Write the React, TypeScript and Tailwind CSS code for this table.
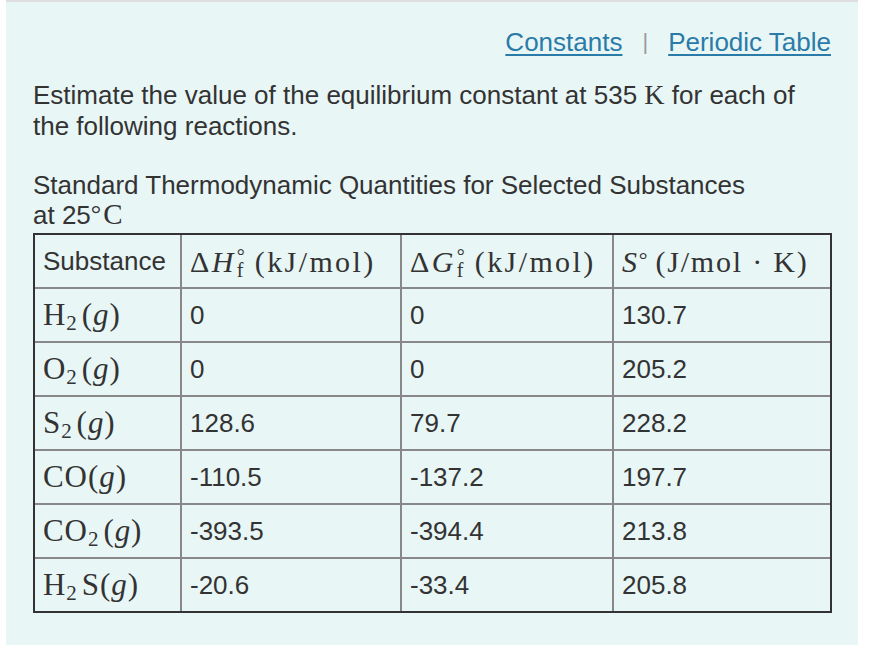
const serif = "font-['Liberation_Serif',serif]";

function SupSub({ sup, sub }: { sup: string; sub: string }) {
  return (
    <span className="inline-flex flex-col align-middle text-[20px] leading-[15px] mx-[1px] tracking-normal">
      <span className="relative top-[3px]">{sup}</span>
      <span className="relative top-[2px]">{sub}</span>
    </span>
  );
}

function Formula({ parts }: { parts: (string | [string])[] }) {
  // string = upright text, [string] = subscript
  return (
    <span className={`${serif} text-[31px] tracking-[0.03em] text-[#333]`}>
      {parts.map((p, i) =>
        typeof p === 'string' ? (
          <span key={i}>{p}</span>
        ) : (
          <sub key={i} className="text-[21px] relative top-[5px] mr-[4px]">
            {p[0]}
          </sub>
        ),
      )}
      (<i>g</i>)
    </span>
  );
}

const rows: { name: (string | [string])[]; h: string; g: string; s: string }[] = [
  { name: ['H', ['2']], h: '0', g: '0', s: '130.7' },
  { name: ['O', ['2']], h: '0', g: '0', s: '205.2' },
  { name: ['S', ['2']], h: '128.6', g: '79.7', s: '228.2' },
  { name: ['CO'], h: '-110.5', g: '-137.2', s: '197.7' },
  { name: ['CO', ['2']], h: '-393.5', g: '-394.4', s: '213.8' },
  { name: ['H', ['2'], 'S'], h: '-20.6', g: '-33.4', s: '205.8' },
];

export default function App() {
  const cell = 'h-[54px] flex items-center px-[8px] border-[#888] border-b-2';
  return (
    <div className="min-h-[652px] bg-white pl-[6px] pr-[24px] font-['Liberation_Sans',Arial,sans-serif] text-[#333]">
      <div className="bg-[#e8f6f6] border-t-2 border-[#dedede] pt-[25px] pb-[32px] pl-[27px] pr-[27px]">
        {/* links */}
        <div className="flex justify-end items-center gap-[20px] text-[26px] leading-[30px]">
          <a href="#" className="text-[#2a7ba8] underline underline-offset-[3px]">
            Constants
          </a>
          <span className="text-[#999] text-[22px]">|</span>
          <a href="#" className="text-[#2a7ba8] underline underline-offset-[3px]">
            Periodic Table
          </a>
        </div>

        <p className="mt-[22px] text-[26px] leading-[31px]">
          Estimate the value of the equilibrium constant at 535 <span className={`${serif} text-[28px]`}>K</span> for
          each of the following reactions.
        </p>

        <p className="mt-[29px] text-[26px] leading-[29px]">
          Standard Thermodynamic Quantities for Selected Substances
          <br />
          at 25<span className={`${serif} text-[26px] relative -top-[2px]`}>°</span>
          <span className={`${serif} text-[29px] ml-[2px]`}>C</span>
        </p>

        <div className="mt-[3px] w-[799px] border-2 border-[#333] grid grid-cols-[147px_220px_212px_216px] text-[26px]">
          <div className={`${cell} border-r-2`}>Substance</div>
          <div className={`${cell} border-r-2 ${serif} text-[30px] tracking-[0.08em]`}>
            Δ<i>H</i>
            <SupSub sup="°" sub="f" />
            <span className="ml-[9px]">(kJ/mol)</span>
          </div>
          <div className={`${cell} border-r-2 ${serif} text-[30px] tracking-[0.08em]`}>
            Δ<i>G</i>
            <SupSub sup="°" sub="f" />
            <span className="ml-[9px]">(kJ/mol)</span>
          </div>
          <div className={`${cell} ${serif} text-[30px] tracking-[0.06em]`}>
            <i>S</i>
            <span className="text-[22px] self-start mt-[8px] mr-[6px]">°</span>
            (J/mol · K)
          </div>
          {rows.map((r, i) => {
            const last = i === rows.length - 1;
            const c = last ? 'h-[52px] flex items-center px-[8px] border-[#888]' : cell;
            return [
              <div key={`a${i}`} className={`${c} border-r-2`}>
                <Formula parts={r.name} />
              </div>,
              <div key={`b${i}`} className={`${c} border-r-2`}>
                {r.h}
              </div>,
              <div key={`c${i}`} className={`${c} border-r-2`}>
                {r.g}
              </div>,
              <div key={`d${i}`} className={c}>
                {r.s}
              </div>,
            ];
          })}
        </div>
      </div>
    </div>
  );
}
